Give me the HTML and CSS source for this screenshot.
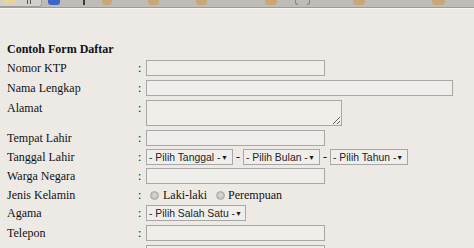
FILE: index.html
```html
<!DOCTYPE html>
<html lang="id">
<head>
<meta charset="utf-8">
<title>Contoh Form Daftar</title>
<link rel="stylesheet" href="styles.css">
</head>
<body>
<div class="bar">
  <div class="tb-btn"><span class="tb-folder"></span><span class="tb-pause"></span></div>
  <span class="ic ic-blue"></span>
  <span class="ic ic-dark"></span>
  <span class="ic ic-tan t1"></span>
  <span class="ic ic-tan t2"></span>
  <span class="ic ic-tan t3"></span>
  <span class="ic ic-tan t4"></span>
  <span class="ic ic-paren"><span class="pl"></span><span class="pr"></span></span>
  <span class="ic ic-tan t5"></span>
  <span class="ic ic-tan t6"></span>
</div>
<main class="page">
  <h1 class="title">Contoh Form Daftar</h1>
  <form class="form">
    <div class="row h20"><span class="lbl">Nomor KTP</span><span class="colon">:</span><div class="field"><input class="txt w179" type="text"></div></div>
    <div class="row h20"><span class="lbl">Nama Lengkap</span><span class="colon">:</span><div class="field"><input class="txt w307" type="text"></div></div>
    <div class="row h30"><span class="lbl">Alamat</span><span class="colon">:</span><div class="field"><textarea class="area"></textarea></div></div>
    <div class="row h19"><span class="lbl">Tempat Lahir</span><span class="colon">:</span><div class="field"><input class="txt w179" type="text"></div></div>
    <div class="row h19"><span class="lbl">Tanggal Lahir</span><span class="colon">:</span>
      <div class="field dates">
        <span class="sel s-tgl"><span>- Pilih Tanggal -</span><span class="arr">&#9660;</span></span>
        <span class="dash">-</span>
        <span class="sel s-bln"><span>- Pilih Bulan -</span><span class="arr">&#9660;</span></span>
        <span class="dash">-</span>
        <span class="sel s-thn"><span>- Pilih Tahun -</span><span class="arr">&#9660;</span></span>
      </div>
    </div>
    <div class="row h19"><span class="lbl">Warga Negara</span><span class="colon">:</span><div class="field"><input class="txt w179" type="text"></div></div>
    <div class="row h18"><span class="lbl">Jenis Kelamin</span><span class="colon">:</span>
      <div class="field radios">
        <label class="opt"><input class="rad" type="radio" name="jk">Laki-laki</label>
        <label class="opt opt2"><input class="rad" type="radio" name="jk">Perempuan</label>
      </div>
    </div>
    <div class="row h20"><span class="lbl">Agama</span><span class="colon">:</span><div class="field"><span class="sel s-agm"><span>- Pilih Salah Satu -</span><span class="arr">&#9660;</span></span></div></div>
    <div class="row h20"><span class="lbl">Telepon</span><span class="colon">:</span><div class="field"><input class="txt w179" type="text"></div></div>
    <div class="row h20"><span class="lbl"></span><span class="colon"></span><div class="field"><input class="txt w179" type="text"></div></div>
  </form>
</main>
</body>
</html>
```
FILE: styles.css
```css
html, body {
  margin: 0;
  padding: 0;
  background: #edeae6;
  overflow: hidden;
  height: 248px;
}
body {
  font-family: "Liberation Serif", "Times New Roman", serif;
  font-size: 12px;
  color: #111;
}
.bar {
  height: 7px;
  background: #bfbcb7;
  border-bottom: 1px solid #9f9c97;
  display: flex;
  align-items: flex-start;
  overflow: hidden;
}
.tb-btn {
  width: 41px;
  height: 6px;
  background: #d3d0cb;
  border-right: 1px solid #a3a09b;
  border-bottom: 1px solid #a3a09b;
  border-bottom-right-radius: 3px;
  display: flex;
  align-items: flex-start;
}
.tb-folder {
  width: 12px;
  height: 4px;
  margin-left: 3px;
  background: #e6d49a;
  border-bottom-left-radius: 2px;
  border-bottom-right-radius: 2px;
}
.tb-pause {
  width: 2px;
  height: 4px;
  margin-left: 12px;
  border-left: 1px solid #555;
  border-right: 1px solid #555;
}
.ic {
  display: block;
  height: 5px;
  border-bottom-left-radius: 3px;
  border-bottom-right-radius: 3px;
}
.ic-blue {
  width: 12px;
  margin-left: 6px;
  background: #3e66c9;
}
.ic-dark {
  width: 2px;
  margin-left: 23px;
  background: #3a3a3a;
  border-radius: 0;
}
.ic-tan {
  background: #c9a877;
}
.t1 { width: 10px; margin-left: 17px; }
.t2 { width: 11px; margin-left: 36px; }
.t3 { width: 11px; margin-left: 37px; }
.t4 { width: 12px; margin-left: 58px; }
.t5 { width: 12px; margin-left: 43px; }
.t6 { width: 13px; margin-left: 67px; }
.ic-paren {
  width: 15px;
  margin-left: 18px;
  height: 5px;
  display: flex;
  justify-content: space-between;
  border-radius: 0;
}
.pl, .pr {
  width: 3px;
  height: 5px;
  box-sizing: border-box;
  border: 1px solid #858380;
  border-top: none;
}
.pl {
  border-right: none;
  border-bottom-left-radius: 3px;
}
.pr {
  border-left: none;
  border-bottom-right-radius: 3px;
}
.page {
  border-top: 1px solid #f6f5f3;
  padding-left: 7px;
}
.title {
  margin: 33px 0 4px 0;
  font-size: 12px;
  line-height: 14px;
  font-weight: bold;
}
.form {
  margin: 0;
}
.row {
  display: grid;
  grid-template-columns: 131px 8px 1fr;
  align-items: start;
}
.h18 { height: 18px; }
.h19 { height: 19px; }
.h20 { height: 20px; }
.h30 { height: 30px; }
.lbl, .colon {
  line-height: 16px;
  white-space: nowrap;
}
.field {
  display: flex;
  align-items: center;
  height: 16px;
}
.txt {
  box-sizing: border-box;
  height: 16px;
  margin: 0;
  padding: 0 2px;
  border: 1px solid #a8a7a5;
  background: #f0eeeb;
  font-size: 11px;
}
.w179 { width: 179px; }
.w307 { width: 307px; }
.area {
  box-sizing: border-box;
  width: 196px;
  height: 26px;
  margin: 0;
  padding: 1px 2px;
  border: 1px solid #a8a7a5;
  background: #f0eeeb;
  font-size: 11px;
  display: block;
}
.h30 .field { height: 26px; }
.sel {
  box-sizing: border-box;
  height: 16px;
  display: flex;
  align-items: center;
  justify-content: space-between;
  padding: 0 4px 0 2px;
  border: 1px solid #a8a7a5;
  background: #f0eeeb;
  font-family: "Liberation Sans", Arial, sans-serif;
  font-size: 10.4px;
  color: #262226;
  white-space: nowrap;
}
.arr {
  font-size: 7px;
  color: #1a1a1a;
}
.s-tgl { width: 87px; }
.s-bln { width: 77px; }
.s-thn { width: 78px; }
.s-agm { width: 100px; }
.dash {
  width: 10px;
  text-align: center;
  line-height: 16px;
}
.opt {
  display: flex;
  align-items: center;
  line-height: 16px;
}
.opt2 {
  margin-left: 5px;
}
.rad {
  appearance: none;
  -webkit-appearance: none;
  box-sizing: border-box;
  width: 9px;
  height: 9px;
  margin: 0 4px 0 4px;
  border-radius: 50%;
  border: 1px solid #a9a9a9;
  background: radial-gradient(circle at 50% 45%, #dcdcdc 0%, #c4c4c4 55%, #b2b2b2 100%);
}
.opt2 .rad {
  margin-right: 3px;
}
```
